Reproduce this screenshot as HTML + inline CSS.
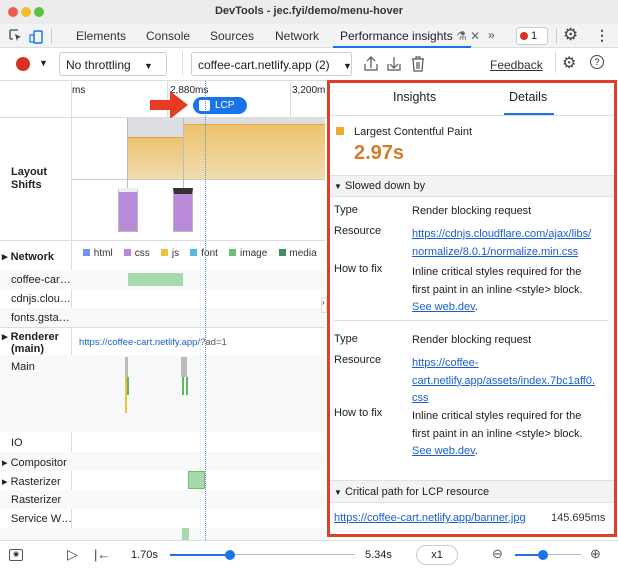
<!DOCTYPE html>
<html><head><meta charset="utf-8"><style>
*{box-sizing:border-box;margin:0;padding:0}
body{width:618px;height:574px;overflow:hidden;background:#fff;font-family:"Liberation Sans",Arial,sans-serif;font-size:11px;color:#202124;position:relative}
.a{position:absolute;white-space:nowrap}
.lk{color:#1a5fd0;text-decoration:underline}
.lbl{position:absolute;left:11px;font-size:11px;color:#202124}
.row{position:absolute;left:0;width:325px;background:#f8f9fa}
</style></head><body>
<div class="a" style="left:0;top:0;width:618px;height:24px;background:#ececec"></div>
<div class="a" style="left:8px;top:7px;width:10px;height:10px;border-radius:50%;background:#ee5b51"></div>
<div class="a" style="left:21px;top:7px;width:10px;height:10px;border-radius:50%;background:#f3bd2f"></div>
<div class="a" style="left:34px;top:7px;width:10px;height:10px;border-radius:50%;background:#5bc23c"></div>
<div class="a" style="left:0;top:5px;width:618px;text-align:center;font-size:11px;font-weight:bold;color:#333">DevTools - jec.fyi/demo/menu-hover</div>
<div class="a" style="left:0;top:24px;width:618px;height:24px;background:#f1f3f4;border-bottom:1px solid #ddd"></div>
<svg class="a" style="left:8px;top:28px" width="40" height="16"><path d="M2 2h8M2 2v9M2 11h3" stroke="#444" fill="none" stroke-width="1.3"/><path d="M7 6l6 3-3 1-1 3z" fill="#444"/><rect x="26" y="3" width="8" height="12" rx="1" stroke="#1a73e8" fill="none" stroke-width="1.4"/><rect x="22" y="7" width="4" height="7" stroke="#1a73e8" fill="none" stroke-width="1.2"/></svg>
<div class="a" style="left:51px;top:28px;width:1px;height:16px;background:#ccc"></div>
<div class="a" style="left:76px;top:29px;font-size:12px;color:#333">Elements</div>
<div class="a" style="left:146px;top:29px;font-size:12px;color:#333">Console</div>
<div class="a" style="left:210px;top:29px;font-size:12px;color:#333">Sources</div>
<div class="a" style="left:275px;top:29px;font-size:12px;color:#333">Network</div>
<div class="a" style="left:340px;top:29px;font-size:12px;color:#202124">Performance insights <span style="color:#666">⚗ ✕</span></div>
<div class="a" style="left:333px;top:46px;height:2px;background:#1a73e8;width:138px"></div>
<div class="a" style="left:488px;top:28px;font-size:12px;color:#555">»</div>
<div class="a" style="left:516px;top:27px;width:32px;height:18px;border:1px solid #ccc;border-radius:3px;background:#fff;font-size:11px;padding-left:14px;line-height:16px">1</div>
<div class="a" style="left:520px;top:32px;width:8px;height:8px;border-radius:50%;background:#d93025"></div>
<div class="a" style="left:556px;top:28px;width:1px;height:16px;background:#ccc"></div>
<div class="a" style="left:563px;top:25px;font-size:17px;color:#444">⚙</div>
<div class="a" style="left:595px;top:27px;font-size:14px;color:#444;font-weight:bold">⋮</div>
<div class="a" style="left:0;top:48px;width:618px;height:33px;background:#fff;border-bottom:1px solid #ddd"></div>
<div class="a" style="left:16px;top:57px;width:14px;height:14px;border-radius:50%;background:#d93025"></div>
<div class="a" style="left:39px;top:58px;font-size:9px">▼</div>
<div class="a" style="left:59px;top:52px;width:108px;height:24px;border:1px solid #ccc;border-radius:3px;padding:5px 6px;font-size:12px">No throttling <span style="font-size:9px;margin-left:10px">▼</span></div>
<div class="a" style="left:182px;top:51px;width:1px;height:24px;background:#ddd"></div>
<div class="a" style="left:191px;top:52px;height:24px;border:1px solid #ccc;border-radius:3px;padding:5px 6px;font-size:12px;width:161px">coffee-cart.netlify.app (2) <span style="font-size:9px;margin-left:10px">▼</span></div>
<svg class="a" style="left:362px;top:54px" width="72" height="20"><g stroke="#555" fill="none" stroke-width="1.2"><path d="M3 10v6h12v-6M9 14V3M5 7l4-4 4 4"/><path d="M26 10v6h12v-6M32 3v11M28 10l4 4 4-4"/><path d="M50 5h12M54 5V3h4v2M51 5l1 12h8l1-12M55 8v7M57 8v7"/></g></svg>
<div class="a lk" style="left:490px;top:58px;font-size:12px;color:#333">Feedback</div>
<div class="a" style="left:555px;top:51px;width:1px;height:22px;background:#ddd"></div>
<div class="a" style="left:562px;top:53px;font-size:16px;color:#444">⚙</div>
<div class="a" style="left:590px;top:55px;width:14px;height:14px;border:1.3px solid #444;border-radius:50%;font-size:9px;text-align:center;line-height:12px">?</div>
<div class="a" style="left:71px;top:81px;width:1px;height:459px;background:#ddd"></div>
<div class="a" style="left:0;top:117px;width:327px;height:1px;background:#ddd"></div>
<div class="a" style="left:167px;top:81px;width:1px;height:36px;background:#ddd"></div>
<div class="a" style="left:290px;top:81px;width:1px;height:36px;background:#ddd"></div>
<div class="a" style="left:72px;top:85px;font-size:10px">ms</div>
<div class="a" style="left:170px;top:85px;font-size:10px">2,880ms</div>
<div class="a" style="left:292px;top:85px;font-size:10px">3,200m</div>
<svg class="a" style="left:148px;top:88px" width="44" height="36"><path d="M2 12h20V3l18 14-18 14v-9H2z" fill="#e53a24"/></svg>
<div class="a" style="left:193px;top:97px;width:54px;height:17px;border-radius:9px;background:#1a73e8;color:#fff;font-size:10px;line-height:17px;padding-left:22px">LCP</div>
<div class="a" style="left:199px;top:100px;width:11px;height:11px;background:#fff;border-radius:2px"></div>
<div class="a" style="left:127px;top:118px;width:56px;height:61px;background:#dcdee1"></div>
<div class="a" style="left:127px;top:137px;width:56px;height:42px;background:linear-gradient(#edc36e,#f1dcb0);border-top:1px solid #e3a53a"></div>
<div class="a" style="left:183px;top:118px;width:142px;height:61px;background:#dcdee1"></div>
<div class="a" style="left:183px;top:124px;width:142px;height:55px;background:linear-gradient(#edc36e,#f1dcb0);border-top:1px solid #e3a53a"></div>
<div class="a" style="left:72px;top:179px;width:253px;height:1px;background:#ccc"></div>
<div class="a" style="left:127px;top:118px;width:1px;height:70px;background:#bbb"></div>
<div class="a" style="left:183px;top:118px;width:1px;height:70px;background:#bbb"></div>
<div class="a" style="left:118px;top:188px;width:20px;height:44px;background:#b98ad8;border:1px solid #bbb;border-top:4px solid #eee"></div>
<div class="a" style="left:173px;top:188px;width:20px;height:44px;background:#b98ad8;border:1px solid #bbb;border-top:6px solid #333"></div>
<div class="a" style="left:11px;top:166px;font-size:11px;font-weight:bold;line-height:13px">Layout<br>Shifts</div>
<div class="a" style="left:0;top:240px;width:325px;height:1px;background:#ddd"></div>
<div class="a" style="left:2px;top:250px;font-size:11px;font-weight:bold">▸ Network</div>
<div class="a" style="left:83px;top:248px;font-size:10px;color:#333;word-spacing:1px">
<span style="display:inline-block;width:7px;height:7px;background:#6b95f0"></span> html &nbsp; <span style="display:inline-block;width:7px;height:7px;background:#b98ad8"></span> css &nbsp; <span style="display:inline-block;width:7px;height:7px;background:#f0c13e"></span> js &nbsp; <span style="display:inline-block;width:7px;height:7px;background:#55b8e0"></span> font &nbsp; <span style="display:inline-block;width:7px;height:7px;background:#6fbf73"></span> image &nbsp; <span style="display:inline-block;width:7px;height:7px;background:#3d8c64"></span> media</div>
<div class="row" style="top:270px;height:19px"></div>
<div class="row" style="top:308px;height:19px"></div>
<div class="a" style="left:128px;top:273px;width:55px;height:13px;background:#a8d9ab"></div>
<div class="lbl" style="top:274px">coffee-car…</div>
<div class="lbl" style="top:293px">cdnjs.clou…</div>
<div class="lbl" style="top:312px">fonts.gsta…</div>
<div class="a" style="left:0;top:327px;width:325px;height:1px;background:#ddd"></div>
<div class="a" style="left:2px;top:330px;font-size:11px;font-weight:bold">▸ Renderer</div>
<div class="a" style="left:11px;top:343px;font-size:11px;font-weight:bold">(main)</div>
<div class="a" style="left:79px;top:337px;font-size:9.5px;color:#1a5fd0">https://coffee-cart.netlify.app/<span style="color:#555">?ad=1</span></div>
<div class="row" style="top:355px;height:77px"></div>
<div class="lbl" style="top:361px">Main</div>
<div class="a" style="left:125px;top:357px;width:3px;height:20px;background:#bbb"></div>
<div class="a" style="left:125px;top:377px;width:2px;height:36px;background:#f0c13e"></div>
<div class="a" style="left:127px;top:377px;width:2px;height:18px;background:#5cb85c"></div>
<div class="a" style="left:181px;top:357px;width:6px;height:20px;background:#bbb"></div>
<div class="a" style="left:182px;top:377px;width:1.5px;height:18px;background:#5cb85c"></div>
<div class="a" style="left:186px;top:377px;width:1.5px;height:18px;background:#5cb85c"></div>
<div class="lbl" style="top:437px">IO</div>
<div class="row" style="top:452px;height:19px"></div>
<div class="a" style="left:2px;top:456px;font-size:11px">▸ Compositor</div>
<div class="a" style="left:2px;top:475px;font-size:11px">▸ Rasterizer</div>
<div class="a" style="left:188px;top:471px;width:17px;height:18px;background:#a8d9ab;border:1px solid #6fbf73"></div>
<div class="row" style="top:490px;height:19px"></div>
<div class="lbl" style="top:494px">Rasterizer</div>
<div class="lbl" style="top:513px">Service W…</div>
<div class="row" style="top:528px;height:12px"></div>
<div class="a" style="left:182px;top:528px;width:7px;height:12px;background:#a8d9ab"></div>
<div class="a" style="left:205px;top:81px;width:0;height:459px;border-left:1px dotted #5a8de0"></div>
<div class="a" style="left:321px;top:297px;width:6px;height:16px;background:#fff;border:1px solid #ddd;font-size:8px">›</div>
<div class="a" style="left:0;top:540px;width:618px;height:34px;background:#fff;border-top:1px solid #ddd"></div>
<div class="a" style="left:9px;top:549px;width:14px;height:12px;border:1px solid #555;border-radius:2px;font-size:7px;text-align:center;line-height:10px">◉</div>
<div class="a" style="left:67px;top:546px;font-size:14px;color:#444">▷</div>
<div class="a" style="left:94px;top:547px;font-size:13px;color:#444">|←</div>
<div class="a" style="left:131px;top:549px;font-size:11px">1.70s</div>
<div class="a" style="left:170px;top:554px;width:60px;height:2px;background:#1a73e8"></div>
<div class="a" style="left:230px;top:554px;width:125px;height:1px;background:#bbb"></div>
<div class="a" style="left:225px;top:550px;width:10px;height:10px;border-radius:50%;background:#1a73e8"></div>
<div class="a" style="left:365px;top:549px;font-size:11px">5.34s</div>
<div class="a" style="left:416px;top:545px;width:42px;height:20px;border:1px solid #ccc;border-radius:10px;text-align:center;line-height:18px;font-size:11px">x1</div>
<div class="a" style="left:492px;top:546px;font-size:13px;color:#555">⊖</div>
<div class="a" style="left:515px;top:554px;width:28px;height:2px;background:#1a73e8"></div>
<div class="a" style="left:543px;top:554px;width:38px;height:1px;background:#bbb"></div>
<div class="a" style="left:538px;top:550px;width:10px;height:10px;border-radius:50%;background:#1a73e8"></div>
<div class="a" style="left:590px;top:546px;font-size:13px;color:#555">⊕</div>
<div class="a" style="left:327px;top:80px;width:290px;height:457px;border:3px solid #e0402a;background:#fff"></div>
<div class="a" style="left:330px;top:115px;width:284px;height:1px;background:#ddd"></div>
<div class="a" style="left:393px;top:90px;font-size:12.5px">Insights</div>
<div class="a" style="left:509px;top:90px;font-size:12.5px">Details</div>
<div class="a" style="left:504px;top:113px;width:50px;height:2px;background:#1a73e8"></div>
<div class="a" style="left:336px;top:127px;width:8px;height:8px;background:#f0a830"></div>
<div class="a" style="left:354px;top:126px;font-size:11px">Largest Contentful Paint</div>
<div class="a" style="left:354px;top:142px;font-size:20px;font-weight:bold;color:#d4792a">2.97s</div>
<div class="a" style="left:330px;top:175px;width:284px;height:22px;background:#f1f3f4;border-top:1px solid #e0e0e0;border-bottom:1px solid #e0e0e0"></div>
<div class="a" style="left:334px;top:180px;font-size:11px"><span style="font-size:8px">▼</span> Slowed down by</div>
<div class="a" style="left:334px;top:204px">Type</div>
<div class="a" style="left:412px;top:205px">Render blocking request</div>
<div class="a" style="left:334px;top:225px">Resource</div>
<div class="a lk" style="left:412px;top:226px;line-height:17.5px">https://cdnjs.cloudflare.com/ajax/libs/<br>normalize/8.0.1/normalize.min.css</div>
<div class="a" style="left:334px;top:263px">How to fix</div>
<div class="a" style="left:412px;top:264px;line-height:17.5px">Inline critical styles required for the<br>first paint in an inline &lt;style&gt; block.<br><span class="lk">See web.dev</span>.</div>
<div class="a" style="left:334px;top:320px;width:274px;height:1px;background:#ddd"></div>
<div class="a" style="left:334px;top:333px">Type</div>
<div class="a" style="left:412px;top:334px">Render blocking request</div>
<div class="a" style="left:334px;top:354px">Resource</div>
<div class="a lk" style="left:412px;top:355px;line-height:17.5px">https://coffee-<br>cart.netlify.app/assets/index.7bc1aff0.<br>css</div>
<div class="a" style="left:334px;top:407px">How to fix</div>
<div class="a" style="left:412px;top:408px;line-height:17.5px">Inline critical styles required for the<br>first paint in an inline &lt;style&gt; block.<br><span class="lk">See web.dev</span>.</div>
<div class="a" style="left:330px;top:480px;width:284px;height:23px;background:#f1f3f4;border-top:1px solid #e0e0e0;border-bottom:1px solid #e0e0e0"></div>
<div class="a" style="left:334px;top:486px;font-size:11px"><span style="font-size:8px">▼</span> Critical path for LCP resource</div>
<div class="a lk" style="left:334px;top:512px">https://coffee-cart.netlify.app/banner.jpg</div>
<div class="a" style="left:551px;top:512px;color:#333">145.695ms</div>
</body></html>
